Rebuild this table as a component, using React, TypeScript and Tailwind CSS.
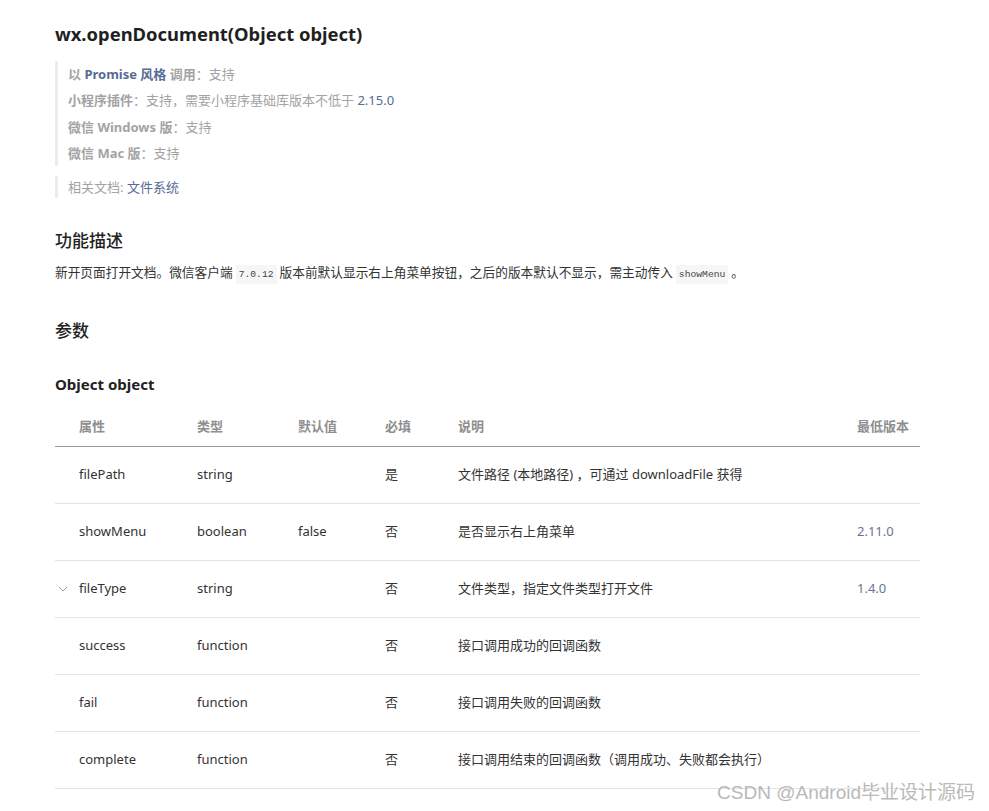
import React from "react";

const rows = [
  { name: "filePath", type: "string", def: "", req: "是", desc: "文件路径 (本地路径) ，可通过 downloadFile 获得", ver: "", chevron: false },
  { name: "showMenu", type: "boolean", def: "false", req: "否", desc: "是否显示右上角菜单", ver: "2.11.0", chevron: false },
  { name: "fileType", type: "string", def: "", req: "否", desc: "文件类型，指定文件类型打开文件", ver: "1.4.0", chevron: true },
  { name: "success", type: "function", def: "", req: "否", desc: "接口调用成功的回调函数", ver: "", chevron: false },
  { name: "fail", type: "function", def: "", req: "否", desc: "接口调用失败的回调函数", ver: "", chevron: false },
  { name: "complete", type: "function", def: "", req: "否", desc: "接口调用结束的回调函数（调用成功、失败都会执行）", ver: "", chevron: false },
];

const font = { fontFamily: '"Noto Sans", "Noto Sans CJK SC", sans-serif' };

export default function App() {
  return (
    <div className="relative h-[811px] w-[989px] overflow-hidden bg-white text-[#333]" style={font}>
      <div className="ml-[55px] w-[865px] pt-[20px]">
        <h1 className="text-[18.4px] leading-[28px] font-bold text-[#1f1f1f]">wx.openDocument(Object object)</h1>

        <div className="mt-[13px] border-l-[3px] border-[#ececec] pl-[10px] text-[13px] leading-[26.3px] text-[#a3a3a3]">
          <div>
            <span className="font-bold">以 </span>
            <span className="font-bold text-[#576b95]">Promise 风格</span>
            <span className="font-bold"> 调用</span>：支持
          </div>
          <div>
            <span className="font-bold">小程序插件</span>：支持，需要小程序基础库版本不低于 <span className="text-[#576b95]">2.15.0</span>
          </div>
          <div>
            <span className="font-bold">微信 Windows 版</span>：支持
          </div>
          <div>
            <span className="font-bold">微信 Mac 版</span>：支持
          </div>
        </div>

        <div className="mt-[10px] border-l-[3px] border-[#ececec] pl-[10px] text-[13px] leading-[22px] text-[#a3a3a3]">
          相关文档: <span className="text-[#576b95]">文件系统</span>
        </div>

        <h2 className="mt-[31px] text-[17px] leading-[24px] font-medium text-[#222]">功能描述</h2>
        <p className="mt-[8px] text-[12.7px] leading-[22px] text-[#333]">
          新开页面打开文档。微信客户端
          <code className="mx-[3px] bg-[#f6f6f6] px-[3px] py-[4px] font-['Liberation_Mono',monospace] text-[9.7px] text-[#444]">7.0.12</code>
          版本前默认显示右上角菜单按钮，之后的版本默认不显示，需主动传入
          <code className="mx-[3px] bg-[#f6f6f6] px-[3px] py-[4px] font-['Liberation_Mono',monospace] text-[9.7px] text-[#444]">showMenu</code>
          。
        </p>

        <h2 className="mt-[33px] text-[17px] leading-[24px] font-medium text-[#222]">参数</h2>

        <h3 className="mt-[30px] text-[15px] leading-[22px] font-bold text-[#222]">Object object</h3>

        <div className="mt-[13px] text-[13px]">
          <div className="grid h-[39px] grid-cols-[118px_101px_87px_73px_399px_87px] items-center border-b border-[#9a9a9a] font-bold text-[#8e8e8e]">
            <div className="pl-[24px]">属性</div>
            <div className="pl-[24px]">类型</div>
            <div className="pl-[24px]">默认值</div>
            <div className="pl-[24px]">必填</div>
            <div className="pl-[24px]">说明</div>
            <div className="pl-[24px]">最低版本</div>
          </div>
          {rows.map((r) => (
            <div
              key={r.name}
              className="grid h-[57px] grid-cols-[118px_101px_87px_73px_399px_87px] items-center border-b border-[#e4e4e4] text-[#333]"
            >
              <div className="flex items-center">
                <div className="flex w-[24px] items-center justify-center">
                  {r.chevron && (
                    <svg width="10" height="6" viewBox="0 0 10 6" fill="none" className="ml-[-8px]">
                      <path d="M1 1l4 4 4-4" stroke="#9a9a9a" strokeWidth="1" />
                    </svg>
                  )}
                </div>
                <span>{r.name}</span>
              </div>
              <div className="pl-[24px]">{r.type}</div>
              <div className="pl-[24px]">{r.def}</div>
              <div className="pl-[24px]">{r.req}</div>
              <div className="pl-[24px]">{r.desc}</div>
              <div className="pl-[24px] text-[#6f7390]">{r.ver}</div>
            </div>
          ))}
        </div>
      </div>

      <div className="absolute right-[14px] bottom-[5px] text-[19px] leading-[26px] text-[#b9b9b9]" style={{ fontFamily: '"Liberation Sans", "Noto Sans CJK SC", sans-serif' }}>
        CSDN @Android毕业设计源码
      </div>
    </div>
  );
}
